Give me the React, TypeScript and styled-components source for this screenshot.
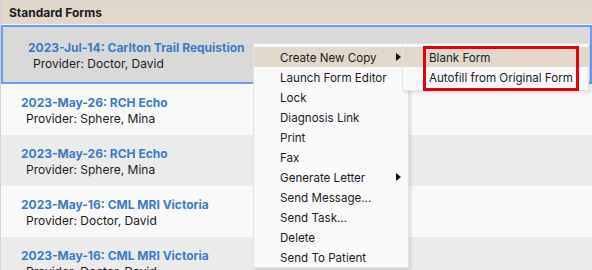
import React from "react";
import styled, { createGlobalStyle } from "styled-components";

const forms = [
  { title: "2023-Jul-14: Carlton Trail Requistion", provider: "Doctor, David" },
  { title: "2023-May-26: RCH Echo", provider: "Sphere, Mina" },
  { title: "2023-May-26: RCH Echo", provider: "Sphere, Mina" },
  { title: "2023-May-16: CML MRI Victoria", provider: "Doctor, David" },
  { title: "2023-May-16: CML MRI Victoria", provider: "Doctor, David" },
];

const menuItems = [
  { label: "Create New Copy", sub: true, active: true },
  { label: "Launch Form Editor" },
  { label: "Lock" },
  { label: "Diagnosis Link" },
  { label: "Print" },
  { label: "Fax" },
  { label: "Generate Letter", sub: true },
  { label: "Send Message..." },
  { label: "Send Task..." },
  { label: "Delete" },
  { label: "Send To Patient" },
];

export default function App() {
  return (
    <Page>
      <GlobalStyle />
      <Header>Standard Forms</Header>
      <List>
        {forms.map((f, i) => (
          <Row key={i} $selected={i === 0} $alt={i % 2 === 0}>
            <Title>{f.title}</Title>
            <Provider>Provider: {f.provider}</Provider>
          </Row>
        ))}
      </List>
      <Menu>
        {menuItems.map((m) => (
          <MenuItem key={m.label} $active={m.active}>
            {m.label}
            {m.sub && <Arrow />}
            {m.active && (
              <SubMenu>
                <MenuItem $active>Blank Form</MenuItem>
                <MenuItem>Autofill from Original Form</MenuItem>
                <Highlight />
              </SubMenu>
            )}
          </MenuItem>
        ))}
      </Menu>
    </Page>
  );
}

const GlobalStyle = createGlobalStyle`
  body {
    margin: 0;
    font-family: Inter, "Noto Sans", sans-serif;
    background: #f9f9f9;
    overflow: hidden;
  }
`;

const Page = styled.div`
  position: relative;
  width: 592px;
  height: 270px;
  overflow: hidden;
  border-left: 1px solid #d4d4d4;
  box-sizing: border-box;
`;

const Header = styled.div`
  height: 24px;
  box-sizing: border-box;
  border-top: 1px solid #d6d6d6;
  background: #e1d8ca;
  padding-left: 8px;
  display: flex;
  align-items: center;
  font-size: 12px;
  font-weight: 700;
  color: #1b1b26;
  margin-bottom: 1px;
`;

const List = styled.div`
  display: flex;
  flex-direction: column;
`;

const Row = styled.div<{ $selected?: boolean; $alt?: boolean }>`
  display: flex;
  flex-direction: column;
  background: ${(p) => (p.$selected ? "#d9d9d9" : p.$alt ? "#ebebeb" : "#f9f9f9")};
  border: ${(p) => (p.$selected ? "2px solid #6b9cf3" : "none")};
  padding: ${(p) => (p.$selected ? "13px 0 10px 25px" : "11px 0 8px 20px")};
  & > span {
    line-height: 16px;
  }
`;

const Title = styled.span`
  font-size: 12px;
  font-weight: 700;
  color: #3a7bc6;
`;

const Provider = styled.span`
  font-size: 12px;
  color: #1b1b26;
  padding-left: 5px;
`;

const Menu = styled.div`
  position: absolute;
  left: 252px;
  top: 43px;
  width: 154px;
  padding-top: 3px;
  background: #fafafa;
  border: 1px solid #e3e3e3;
  box-shadow: 2px 2px 3px rgba(0, 0, 0, 0.12);
`;

const MenuItem = styled.div<{ $active?: boolean }>`
  position: relative;
  height: 20px;
  line-height: 22px;
  padding-left: 26px;
  font-size: 11.6px;
  color: #1b1b26;
  white-space: nowrap;
  background: ${(p) => (p.$active ? "#e1d8ca" : "transparent")};
`;

const Arrow = styled.span`
  position: absolute;
  right: 7px;
  top: 6px;
  width: 0;
  height: 0;
  border-top: 4px solid transparent;
  border-bottom: 4px solid transparent;
  border-left: 5px solid #111;
`;

const SubMenu = styled.div`
  position: absolute;
  left: 148px;
  top: -4px;
  width: 185px;
  padding: 3px 0;
  line-height: 20px;
  background: #fafafa;
  border: 1px solid #e3e3e3;
  box-shadow: 2px 2px 3px rgba(0, 0, 0, 0.1);
  z-index: 2;
`;

const Highlight = styled.div`
  position: absolute;
  left: 20px;
  top: 2px;
  width: 156px;
  height: 45px;
  box-sizing: border-box;
  border: 3px solid #e5000c;
  pointer-events: none;
`;
